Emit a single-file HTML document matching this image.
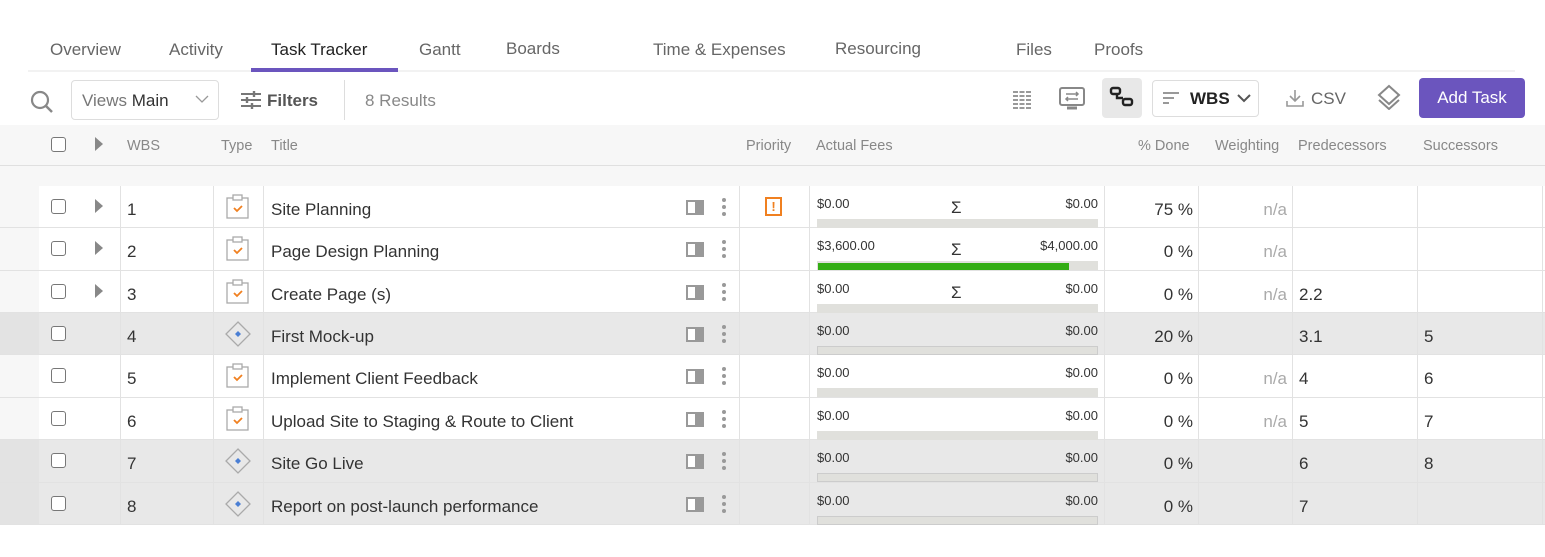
<!DOCTYPE html><html><head><style>
*{margin:0;padding:0;box-sizing:border-box}
body{width:1545px;height:557px;background:#fff;font-family:"Liberation Sans",sans-serif;position:relative;overflow:hidden;color:#333}
.a{position:absolute;white-space:nowrap}
.tab{top:40px;font-size:17px;color:#666}
.hd{top:138px;font-size:14.5px;color:#888}
.row{position:absolute;left:0;width:1545px;height:43px;border-bottom:1px solid #e2e2e2}
.row .l{position:absolute;left:0;top:0;width:39px;height:100%;background:#f7f7f7}
.row.g{background:#e8e8e8}.row.g .l{background:#e3e3e3}
.v{position:absolute;top:0;height:100%;width:1px;background:#e2e2e2}
.t{position:absolute;top:14px;font-size:17px;color:#333}
.cb{position:absolute;left:51px;top:13px;width:15px;height:15px;border:1.5px solid #777;border-radius:3px;background:#fff}
.tri{position:absolute;left:95px;top:13px;width:0;height:0;border-left:8px solid #888;border-top:7px solid transparent;border-bottom:7px solid transparent}
.m{position:absolute;font-size:13px;color:#333;top:10px}
.bar{position:absolute;left:817px;top:33px;width:281px;height:9px;background:#e0e0dc}
.g .bar{border:1px solid #ccc}
.dots{position:absolute;left:722px;top:12px;width:4px}
.dots i{display:block;width:4px;height:4px;border-radius:2px;background:#999;margin-bottom:3px}
.pn{position:absolute;left:686px;top:14px;width:18px;height:15px;border:2px solid #999;border-right:9px solid #999;background:#fff}
</style></head><body>
<div class="a" style="left:28px;top:70px;width:1487px;height:2px;background:#f2f2f2"></div>
<div class="a" style="left:251px;top:68px;width:147px;height:4px;background:#6b55be"></div>
<div class="a tab" style="left:50px">Overview</div>
<div class="a tab" style="left:169px">Activity</div>
<div class="a tab" style="left:271px;color:#222">Task Tracker</div>
<div class="a tab" style="left:419px">Gantt</div>
<div class="a tab" style="left:506px;top:39px">Boards</div>
<div class="a tab" style="left:653px">Time &amp; Expenses</div>
<div class="a tab" style="left:835px;top:39px">Resourcing</div>
<div class="a tab" style="left:1016px">Files</div>
<div class="a tab" style="left:1094px">Proofs</div>

<svg class="a" style="left:29px;top:89px" width="26" height="26" viewBox="0 0 26 26"><circle cx="11" cy="11" r="8" fill="none" stroke="#888" stroke-width="2.2"/><path d="M17 17l6 6" stroke="#888" stroke-width="2.5"/></svg>
<div class="a" style="left:71px;top:80px;width:148px;height:40px;border:1px solid #ddd;border-radius:4px"></div>
<div class="a" style="left:82px;top:91px;font-size:17px;color:#777">Views <span style="color:#333">Main</span></div>
<svg class="a" style="left:195px;top:95px" width="14" height="9"><path d="M1 1l6 6 6-6" fill="none" stroke="#999" stroke-width="1.3"/></svg>
<svg class="a" style="left:241px;top:91px" width="20" height="18"><path d="M0 3h20M0 9h20M0 15h20" stroke="#777" stroke-width="2"/><path d="M13 0v6M6 6v6M11 12v6" stroke="#777" stroke-width="2.4"/></svg>
<div class="a" style="left:267px;top:91px;font-size:17px;color:#555;font-weight:bold">Filters</div>
<div class="a" style="left:344px;top:80px;width:1px;height:40px;background:#ddd"></div>
<div class="a" style="left:365px;top:91px;font-size:17px;color:#888">8 Results</div>

<svg class="a" style="left:1013px;top:90px" width="18" height="20"><path d="M0 2h18M0 6h18M0 10h18M0 14h18M0 18h18" stroke="#999" stroke-width="2" stroke-dasharray="5 1.5"/></svg>
<svg class="a" style="left:1058px;top:86px" width="28" height="26"><rect x="2" y="2" width="24" height="17" rx="2" fill="none" stroke="#888" stroke-width="2"/><path d="M9 22h10" stroke="#888" stroke-width="3"/><path d="M8 8h12M18 6l2 2-2 2M20 13H8M10 11l-2 2 2 2" fill="none" stroke="#888" stroke-width="1.5"/></svg>
<div class="a" style="left:1102px;top:78px;width:40px;height:40px;background:#e8e8e8;border-radius:4px"></div>
<svg class="a" style="left:1109px;top:86px" width="26" height="22"><rect x="2" y="2" width="9" height="6" rx="2" fill="none" stroke="#222" stroke-width="2.4"/><rect x="14" y="13" width="9" height="6" rx="2" fill="none" stroke="#222" stroke-width="2.4"/><path d="M8 8v4h6" fill="none" stroke="#222" stroke-width="2.4"/></svg>
<div class="a" style="left:1152px;top:80px;width:107px;height:37px;border:1px solid #ddd;border-radius:4px"></div>
<svg class="a" style="left:1163px;top:92px" width="16" height="12"><path d="M0 1h16M0 6h11M0 11h6" stroke="#999" stroke-width="2"/></svg>
<div class="a" style="left:1190px;top:89px;font-size:17px;color:#222;font-weight:bold">WBS</div>
<svg class="a" style="left:1237px;top:94px" width="14" height="9"><path d="M1 1l6 6 6-6" fill="none" stroke="#555" stroke-width="2"/></svg>
<svg class="a" style="left:1286px;top:89px" width="18" height="18"><path d="M9 1v11M4 7l5 5 5-5M1 12v5h16v-5" fill="none" stroke="#999" stroke-width="1.6"/></svg>
<div class="a" style="left:1311px;top:89px;font-size:17px;color:#666">CSV</div>
<svg class="a" style="left:1376px;top:84px" width="26" height="26"><path d="M13 2l10 9-10 9-10-9z" fill="none" stroke="#888" stroke-width="2"/><path d="M3 16l10 9 10-9" fill="none" stroke="#888" stroke-width="2"/></svg>
<div class="a" style="left:1419px;top:78px;width:106px;height:40px;background:#6b55be;border-radius:4px;color:#fff;font-size:17px;text-align:center;line-height:40px">Add Task</div>

<div class="a" style="left:0;top:125px;width:1545px;height:61px;background:#f7f7f7"></div>
<div class="a" style="left:0;top:165px;width:1545px;height:1px;background:#e0e0e0"></div>
<div class="cb" style="top:137px"></div><div class="tri" style="top:137px"></div>
<div class="a hd" style="left:127px">WBS</div>
<div class="a hd" style="left:221px">Type</div>
<div class="a hd" style="left:271px">Title</div>
<div class="a hd" style="left:746px">Priority</div>
<div class="a hd" style="left:816px">Actual Fees</div>
<div class="a hd" style="left:1138px">% Done</div>
<div class="a hd" style="left:1215px">Weighting</div>
<div class="a hd" style="left:1298px">Predecessors</div>
<div class="a hd" style="left:1423px">Successors</div>

<div id="rows"></div>
<script>
var R=[["1","t","Site Planning",1,"$0.00","$0.00",1,0,"75 %","n/a","",""],
["2","t","Page Design Planning",1,"$3,600.00","$4,000.00",1,90,"0 %","n/a","",""],
["3","t","Create Page (s)",1,"$0.00","$0.00",1,0,"0 %","n/a","2.2",""],
["4","d","First Mock-up",0,"$0.00","$0.00",0,0,"20 %","","3.1","5"],
["5","t","Implement Client Feedback",0,"$0.00","$0.00",0,0,"0 %","n/a","4","6"],
["6","t","Upload Site to Staging &amp; Route to Client",0,"$0.00","$0.00",0,0,"0 %","n/a","5","7"],
["7","d","Site Go Live",0,"$0.00","$0.00",0,0,"0 %","","6","8"],
["8","d","Report on post-launch performance",0,"$0.00","$0.00",0,0,"0 %","","7",""]];
var tops=[186,228,271,313,355,398,440,483],h="";
R.forEach(function(r,i){
var g=r[1]=="d";
h+='<div class="row'+(g?' g':'')+'" style="top:'+tops[i]+'px;height:'+(i<7?tops[i+1]-tops[i]:42)+'px"><div class="l"></div>';
[120,213,263,739,809,1104,1198,1292,1417,1542].forEach(function(x){h+='<div class="v" style="left:'+x+'px"></div>'});
h+='<div class="cb"></div>'+(r[3]?'<div class="tri"></div>':'');
h+='<div class="t" style="left:127px">'+r[0]+'</div>';
if(g)h+='<svg style="position:absolute;left:225px;top:8px" width="26" height="26"><path d="M13 1l12 12-12 12L1 13z" fill="none" stroke="#aaa" stroke-width="1.3"/><path d="M13 10l3 3-3 3-3-3z" fill="#4a7fd4"/></svg>';
else h+='<svg style="position:absolute;left:226px;top:8px" width="24" height="26"><rect x="1" y="4" width="21" height="20" fill="#fff" stroke="#aaa" stroke-width="1.3"/><rect x="7" y="1" width="9" height="5" fill="#fff" stroke="#aaa" stroke-width="1.3"/><path d="M8 14l3 3 5-5" fill="none" stroke="#f08020" stroke-width="1.8"/></svg>';
h+='<div class="t" style="left:271px">'+r[2]+'</div>';
h+='<div class="pn"></div><div class="dots"><i></i><i></i><i></i></div>';
if(i==0)h+='<div style="position:absolute;left:765px;top:11px;width:17px;height:19px;border:2px solid #f08020;color:#f08020;font-weight:bold;font-size:13px;text-align:center;line-height:15px">!</div>';
h+='<div class="m" style="left:817px">'+r[4]+'</div><div class="m" style="right:447px">'+r[5]+'</div>';
if(r[6])h+='<div class="t" style="left:951px;top:12px;font-size:17px">&Sigma;</div>';
h+='<div class="bar">'+(r[7]?'<div style="margin:2px 0 0 1px;width:251px;height:7px;background:#33ad14"></div>':'')+'</div>';
h+='<div class="t" style="right:352px">'+r[8]+'</div>';
h+='<div class="t" style="right:258px;color:#aaa">'+r[9]+'</div>';
h+='<div class="t" style="left:1299px">'+r[10]+'</div><div class="t" style="left:1424px">'+r[11]+'</div></div>';
});
document.getElementById("rows").innerHTML=h;
</script>
</body></html>
